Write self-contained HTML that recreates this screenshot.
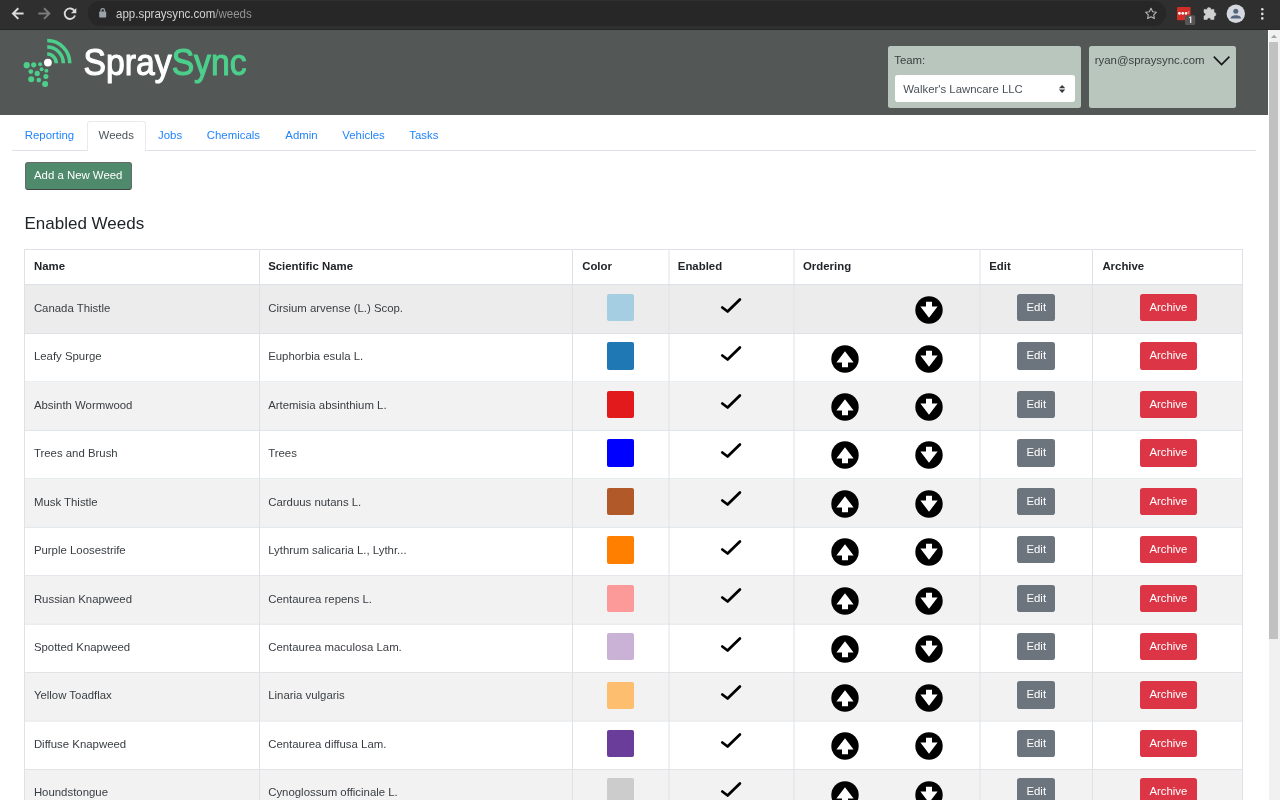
<!DOCTYPE html><html><head><meta charset="utf-8"><title>SpraySync - Weeds</title><style>
*{box-sizing:border-box;margin:0;padding:0}
html,body{width:1280px;height:800px;overflow:hidden;background:#fff}
#root{position:absolute;left:0;top:0;width:1280px;height:800px;will-change:transform}
body{position:relative;font-family:"Liberation Sans",sans-serif;color:#212529;font-size:11.4px;line-height:17px}
.a{position:absolute;white-space:nowrap}
#chrome{position:absolute;left:0;top:0;width:1280px;height:30px;background:#2f2f2f;border-bottom:1px solid #262626}
#pill{position:absolute;left:88px;top:1.2px;width:1077.5px;height:24.4px;border-radius:12.2px;background:#272727}
#url{position:absolute;left:115.5px;top:6px;font-size:12.4px;line-height:16px;color:#d2d2d2;transform:scaleX(0.93);transform-origin:0 0}
#url span{color:#949494}
#hdr{position:absolute;left:0;top:30px;width:1268px;height:85px;background:#535857}
.box{position:absolute;top:46px;height:62px;background:#b8c6be;border-radius:2.5px}
.sel{position:absolute;left:894.5px;top:75.3px;width:180px;height:26.7px;background:#fff;border-radius:2.8px}
.tab{position:absolute;top:126.7px;color:#007bff}
#navline{position:absolute;left:12px;top:150px;width:1244px;height:1px;background:#dee2e6}
#acttab{position:absolute;left:86.5px;top:120.5px;width:59.3px;height:30.5px;background:#fff;border:1px solid #e8eaed;border-bottom:none;border-radius:3px 3px 0 0}
#addbtn{position:absolute;left:24.6px;top:162px;width:107.4px;height:27.6px;background:#4f8a6c;border:1px solid #66686b;border-bottom-color:#3f4543;border-radius:3px;color:#fff}
#h4{position:absolute;left:24.5px;top:213.6px;font-size:17px;line-height:20px;color:#212529}
.th{position:absolute;top:257.5px;font-weight:bold;color:#212529}
.sw{position:absolute;width:27px;height:27.4px;border-radius:2px}
.td{color:#393d41}
.btn{position:absolute;height:27.4px;border-radius:2.8px;color:#fff;text-align:center;line-height:27.4px}
.edit{left:1017.25px;width:38px;background:#6c757d}
.arch{left:1140px;width:56.75px;background:#dc3545}
#sb{position:absolute;left:1268px;top:30px;width:12px;height:770px;background:#f1f1f1;border-left:1px solid #fff}
#thumb{position:absolute;left:1269px;top:42px;width:9.2px;height:597px;background:#c1c1c1}
</style></head><body><div id="root">
<div id="chrome"></div><div id="pill"></div>
<svg class="a" style="left:0;top:0" width="120" height="30" viewBox="0 0 120 30"><g fill="none" stroke-linecap="butt" stroke-width="2"><path d="M23.6 13.6H13.4M18.3 8.3L13 13.6L18.3 18.9" stroke="#dcdcdc"/><path d="M38.3 13.6H48.6M44 8.3L49.3 13.6L44 18.9" stroke="#7b7b7b"/><path d="M74.6 11.05A5.3 5.3 0 1 0 75 15.5" stroke="#dcdcdc" stroke-width="1.85"/></g><path d="M76.3 7.9V13.2H71Z" fill="#dcdcdc"/><rect x="99.2" y="11.6" width="7" height="6" rx="0.8" fill="#9da3ab"/><path d="M100.9 11.8V10.4a1.8 1.8 0 0 1 3.6 0V11.8" fill="none" stroke="#9da3ab" stroke-width="1.3"/></svg>
<div id="url">app.spraysync.com<span>/weeds</span></div>
<svg class="a" style="left:1140px;top:0" width="140" height="30" viewBox="1140 0 140 30"><path d="M1151 8.3l1.65 3.4 3.75.5-2.7 2.6.65 3.75-3.35-1.8-3.35 1.8.65-3.75-2.7-2.6 3.75-.5z" fill="none" stroke="#b4b4b4" stroke-width="1.15" stroke-linejoin="round"/><rect x="1177" y="7" width="13.6" height="13.3" rx="1" fill="#d32d27"/><rect x="1178.1" y="12.1" width="2.7" height="2.6" rx="1.1" fill="#fff"/><rect x="1181.4" y="12.1" width="2.7" height="2.6" rx="1.1" fill="#fff"/><rect x="1184.7" y="12.1" width="2.7" height="2.6" rx="1.1" fill="#fff"/><rect x="1188.4" y="11.2" width="0.8" height="2.4" fill="#f4c4c2"/><rect x="1185" y="15.2" width="10.2" height="9.8" rx="1.5" fill="#555"/><path d="M1190.1 16.5h1.2v6.4h-1.2zM1190.1 16.5l-1 0.9v0.9l1-0.6z" fill="#f0f0f0"/><path d="M1204 9.4H1207.1A1.9 1.9 0 0 1 1210.9 9.4H1214V12.4A1.9 1.9 0 0 1 1214 16.2V19.5H1210.8A1.8 1.8 0 0 0 1207.2 19.5H1204V15.9A1.6 1.6 0 0 0 1204 12.7Z" fill="#d0d0d0" stroke="#d0d0d0" stroke-width="0.5" stroke-linejoin="round"/><circle cx="1235.8" cy="13.7" r="9.2" fill="#d5d8de"/><circle cx="1235.8" cy="11.3" r="2.5" fill="#55657d"/><path d="M1230.6 18.6c0-2.4 2.6-3.4 5.2-3.4s5.2 1 5.2 3.4z" fill="#55657d"/><circle cx="1262.3" cy="9.3" r="1.3" fill="#ddd"/><circle cx="1262.3" cy="13.9" r="1.3" fill="#ddd"/><circle cx="1262.3" cy="18.4" r="1.3" fill="#ddd"/></svg>
<div id="hdr"></div>
<svg class="a" style="left:0;top:30px" width="260" height="85" viewBox="0 30 260 85"><circle cx="26.7" cy="65.2" r="3.1" fill="#4ccf8b"/><circle cx="33.7" cy="64.8" r="2.6" fill="#4ccf8b"/><circle cx="40.1" cy="64.2" r="2.0" fill="#4ccf8b"/><circle cx="41.6" cy="69.2" r="2.0" fill="#4ccf8b"/><circle cx="46.4" cy="70.7" r="2.0" fill="#4ccf8b"/><circle cx="30.8" cy="71.6" r="2.4" fill="#4ccf8b"/><circle cx="37.2" cy="73.4" r="2.6" fill="#4ccf8b"/><circle cx="45.9" cy="76.6" r="2.5" fill="#4ccf8b"/><circle cx="31.2" cy="79.2" r="3.0" fill="#4ccf8b"/><circle cx="38.8" cy="80.1" r="2.3" fill="#4ccf8b"/><circle cx="45.1" cy="84.1" r="3.0" fill="#4ccf8b"/><circle cx="47.9" cy="62.6" r="3.9" fill="#fff"/><path d="M47.2 54.1A9.1 9.1 0 0 1 56.300000000000004 63.2" fill="none" stroke="#4ccf8b" stroke-width="3.5"/><path d="M47.2 47.1A16.1 16.1 0 0 1 63.300000000000004 63.2" fill="none" stroke="#4ccf8b" stroke-width="3.5"/><path d="M47.2 40.6A22.6 22.6 0 0 1 69.80000000000001 63.2" fill="none" stroke="#4ccf8b" stroke-width="3.5"/><text x="83.6" y="75.0" font-family="Liberation Sans" font-size="36" font-weight="normal" fill="#fff" stroke="#fff" stroke-width="1.1" stroke-linejoin="round" textLength="163" lengthAdjust="spacingAndGlyphs">Spray<tspan fill="#4ccf8b" stroke="#4ccf8b">Sync</tspan></text></svg>
<div class="box" style="left:888.2px;width:192.8px"></div>
<div class="box" style="left:1089px;width:147px"></div>
<div class="a" style="left:894.2px;top:52px;color:#3a3f3d">Team:</div>
<div class="sel"></div>
<div class="a" style="left:903.3px;top:81px;color:#495057">Walker's Lawncare LLC</div>
<svg class="a" style="left:1055px;top:82px" width="14" height="14" viewBox="1055 82 14 14"><path d="M1058.9 88.3L1062.1 84.9L1065.3 88.3Z M1058.9 89.5L1062.1 92.9L1065.3 89.5Z" fill="#343a40"/></svg>
<div class="a" style="left:1094.8px;top:52px;color:#3a3f3d">ryan@spraysync.com</div>
<svg class="a" style="left:1210px;top:52px" width="24" height="16" viewBox="1210 52 24 16"><path d="M1213.8 56.6L1221.6 64.6L1229.4 56.6" fill="none" stroke="#161616" stroke-width="1.6"/></svg>
<div id="navline"></div><div id="acttab"></div>
<div class="tab a" style="left:24.8px;color:#2284fc">Reporting</div>
<div class="tab a" style="left:98.6px;color:#495057">Weeds</div>
<div class="tab a" style="left:158.1px;color:#2284fc">Jobs</div>
<div class="tab a" style="left:206.8px;color:#2284fc">Chemicals</div>
<div class="tab a" style="left:285.3px;color:#2284fc">Admin</div>
<div class="tab a" style="left:342.3px;color:#2284fc">Vehicles</div>
<div class="tab a" style="left:409.3px;color:#2284fc">Tasks</div>
<div id="addbtn"><div class="a" style="left:8.4px;top:3.8px">Add a New Weed</div></div>
<div id="h4">Enabled Weeds</div>
<svg class="a" style="left:0;top:249px" width="1268" height="551" viewBox="0 249 1268 551"><rect x="25" y="285.50" width="1217" height="47.50" fill="#ececec"/><rect x="24" y="333.00" width="1219" height="1" fill="#dee2e6"/><rect x="24" y="381.44" width="1219" height="1" fill="#dee2e6"/><rect x="25" y="382.44" width="1217" height="47.44" fill="#f2f2f2"/><rect x="24" y="429.88" width="1219" height="1" fill="#dee2e6"/><rect x="24" y="478.32" width="1219" height="1" fill="#dee2e6"/><rect x="25" y="479.32" width="1217" height="47.44" fill="#f2f2f2"/><rect x="24" y="526.76" width="1219" height="1" fill="#dee2e6"/><rect x="24" y="575.20" width="1219" height="1" fill="#dee2e6"/><rect x="25" y="576.20" width="1217" height="47.44" fill="#f2f2f2"/><rect x="24" y="623.64" width="1219" height="1" fill="#dee2e6"/><rect x="24" y="672.08" width="1219" height="1" fill="#dee2e6"/><rect x="25" y="673.08" width="1217" height="47.44" fill="#f2f2f2"/><rect x="24" y="720.52" width="1219" height="1" fill="#dee2e6"/><rect x="24" y="768.96" width="1219" height="1" fill="#dee2e6"/><rect x="25" y="769.96" width="1217" height="47.44" fill="#f2f2f2"/><rect x="24" y="817.40" width="1219" height="1" fill="#dee2e6"/><rect x="24" y="249" width="1219" height="1" fill="#dee2e6"/><rect x="24" y="284" width="1219" height="1.5" fill="#dee2e6"/><rect x="24" y="249" width="1" height="551" fill="#dee2e6"/><rect x="259" y="249" width="1" height="551" fill="#dee2e6"/><rect x="572" y="249" width="1" height="551" fill="#dee2e6"/><rect x="668.5" y="249" width="1" height="551" fill="#dee2e6"/><rect x="793.5" y="249" width="1" height="551" fill="#dee2e6"/><rect x="979.5" y="249" width="1" height="551" fill="#dee2e6"/><rect x="1092" y="249" width="1" height="551" fill="#dee2e6"/><rect x="1242" y="249" width="1" height="551" fill="#dee2e6"/></svg>
<div class="th a" style="left:34px">Name</div>
<div class="th a" style="left:268.2px">Scientific Name</div>
<div class="th a" style="left:582.2px">Color</div>
<div class="th a" style="left:677.8px">Enabled</div>
<div class="th a" style="left:803px">Ordering</div>
<div class="th a" style="left:989.2px">Edit</div>
<div class="th a" style="left:1102.4px">Archive</div>
<div class="a td" style="left:33.9px;top:299.90px">Canada Thistle</div>
<div class="a td" style="left:268.2px;top:299.90px">Cirsium arvense (L.) Scop.</div>
<div class="sw" style="left:607px;top:294.00px;background:#a6cee3"></div>
<svg class="a" style="left:715px;top:285.50px" width="32" height="40" viewBox="0 0 32 40"><path d="M7.3 21.5L12.6 25.5L24.9 13.5" fill="none" stroke="#000" stroke-width="2.75" stroke-linecap="round" stroke-linejoin="round"/></svg>
<svg class="a" style="left:915px;top:296.10px" width="28" height="28" viewBox="-14 -14 28 28"><circle r="13.7" fill="#000"/><path d="M0 7.7L8.6 -3.6H3V-8.2H-3V-3.6H-8.6Z" fill="#fff"/></svg>
<div class="btn edit" style="top:293.90px">Edit</div>
<div class="btn arch" style="top:293.90px">Archive</div>
<div class="a td" style="left:33.9px;top:348.34px">Leafy Spurge</div>
<div class="a td" style="left:268.2px;top:348.34px">Euphorbia esula L.</div>
<div class="sw" style="left:607px;top:342.44px;background:#1f78b4"></div>
<svg class="a" style="left:715px;top:333.94px" width="32" height="40" viewBox="0 0 32 40"><path d="M7.3 21.5L12.6 25.5L24.9 13.5" fill="none" stroke="#000" stroke-width="2.75" stroke-linecap="round" stroke-linejoin="round"/></svg>
<svg class="a" style="left:831px;top:344.54px" width="28" height="28" viewBox="-14 -14 28 28"><circle r="13.7" fill="#000"/><path d="M0 -7.7L8.6 3.6H3V8.2H-3V3.6H-8.6Z" fill="#fff"/></svg>
<svg class="a" style="left:915px;top:344.54px" width="28" height="28" viewBox="-14 -14 28 28"><circle r="13.7" fill="#000"/><path d="M0 7.7L8.6 -3.6H3V-8.2H-3V-3.6H-8.6Z" fill="#fff"/></svg>
<div class="btn edit" style="top:342.34px">Edit</div>
<div class="btn arch" style="top:342.34px">Archive</div>
<div class="a td" style="left:33.9px;top:396.78px">Absinth Wormwood</div>
<div class="a td" style="left:268.2px;top:396.78px">Artemisia absinthium L.</div>
<div class="sw" style="left:607px;top:390.88px;background:#e31a1c"></div>
<svg class="a" style="left:715px;top:382.38px" width="32" height="40" viewBox="0 0 32 40"><path d="M7.3 21.5L12.6 25.5L24.9 13.5" fill="none" stroke="#000" stroke-width="2.75" stroke-linecap="round" stroke-linejoin="round"/></svg>
<svg class="a" style="left:831px;top:392.98px" width="28" height="28" viewBox="-14 -14 28 28"><circle r="13.7" fill="#000"/><path d="M0 -7.7L8.6 3.6H3V8.2H-3V3.6H-8.6Z" fill="#fff"/></svg>
<svg class="a" style="left:915px;top:392.98px" width="28" height="28" viewBox="-14 -14 28 28"><circle r="13.7" fill="#000"/><path d="M0 7.7L8.6 -3.6H3V-8.2H-3V-3.6H-8.6Z" fill="#fff"/></svg>
<div class="btn edit" style="top:390.78px">Edit</div>
<div class="btn arch" style="top:390.78px">Archive</div>
<div class="a td" style="left:33.9px;top:445.22px">Trees and Brush</div>
<div class="a td" style="left:268.2px;top:445.22px">Trees</div>
<div class="sw" style="left:607px;top:439.32px;background:#0000ff"></div>
<svg class="a" style="left:715px;top:430.82px" width="32" height="40" viewBox="0 0 32 40"><path d="M7.3 21.5L12.6 25.5L24.9 13.5" fill="none" stroke="#000" stroke-width="2.75" stroke-linecap="round" stroke-linejoin="round"/></svg>
<svg class="a" style="left:831px;top:441.42px" width="28" height="28" viewBox="-14 -14 28 28"><circle r="13.7" fill="#000"/><path d="M0 -7.7L8.6 3.6H3V8.2H-3V3.6H-8.6Z" fill="#fff"/></svg>
<svg class="a" style="left:915px;top:441.42px" width="28" height="28" viewBox="-14 -14 28 28"><circle r="13.7" fill="#000"/><path d="M0 7.7L8.6 -3.6H3V-8.2H-3V-3.6H-8.6Z" fill="#fff"/></svg>
<div class="btn edit" style="top:439.22px">Edit</div>
<div class="btn arch" style="top:439.22px">Archive</div>
<div class="a td" style="left:33.9px;top:493.66px">Musk Thistle</div>
<div class="a td" style="left:268.2px;top:493.66px">Carduus nutans L.</div>
<div class="sw" style="left:607px;top:487.76px;background:#b15928"></div>
<svg class="a" style="left:715px;top:479.26px" width="32" height="40" viewBox="0 0 32 40"><path d="M7.3 21.5L12.6 25.5L24.9 13.5" fill="none" stroke="#000" stroke-width="2.75" stroke-linecap="round" stroke-linejoin="round"/></svg>
<svg class="a" style="left:831px;top:489.86px" width="28" height="28" viewBox="-14 -14 28 28"><circle r="13.7" fill="#000"/><path d="M0 -7.7L8.6 3.6H3V8.2H-3V3.6H-8.6Z" fill="#fff"/></svg>
<svg class="a" style="left:915px;top:489.86px" width="28" height="28" viewBox="-14 -14 28 28"><circle r="13.7" fill="#000"/><path d="M0 7.7L8.6 -3.6H3V-8.2H-3V-3.6H-8.6Z" fill="#fff"/></svg>
<div class="btn edit" style="top:487.66px">Edit</div>
<div class="btn arch" style="top:487.66px">Archive</div>
<div class="a td" style="left:33.9px;top:542.10px">Purple Loosestrife</div>
<div class="a td" style="left:268.2px;top:542.10px">Lythrum salicaria L., Lythr...</div>
<div class="sw" style="left:607px;top:536.20px;background:#ff7f00"></div>
<svg class="a" style="left:715px;top:527.70px" width="32" height="40" viewBox="0 0 32 40"><path d="M7.3 21.5L12.6 25.5L24.9 13.5" fill="none" stroke="#000" stroke-width="2.75" stroke-linecap="round" stroke-linejoin="round"/></svg>
<svg class="a" style="left:831px;top:538.30px" width="28" height="28" viewBox="-14 -14 28 28"><circle r="13.7" fill="#000"/><path d="M0 -7.7L8.6 3.6H3V8.2H-3V3.6H-8.6Z" fill="#fff"/></svg>
<svg class="a" style="left:915px;top:538.30px" width="28" height="28" viewBox="-14 -14 28 28"><circle r="13.7" fill="#000"/><path d="M0 7.7L8.6 -3.6H3V-8.2H-3V-3.6H-8.6Z" fill="#fff"/></svg>
<div class="btn edit" style="top:536.10px">Edit</div>
<div class="btn arch" style="top:536.10px">Archive</div>
<div class="a td" style="left:33.9px;top:590.54px">Russian Knapweed</div>
<div class="a td" style="left:268.2px;top:590.54px">Centaurea repens L.</div>
<div class="sw" style="left:607px;top:584.64px;background:#fb9a99"></div>
<svg class="a" style="left:715px;top:576.14px" width="32" height="40" viewBox="0 0 32 40"><path d="M7.3 21.5L12.6 25.5L24.9 13.5" fill="none" stroke="#000" stroke-width="2.75" stroke-linecap="round" stroke-linejoin="round"/></svg>
<svg class="a" style="left:831px;top:586.74px" width="28" height="28" viewBox="-14 -14 28 28"><circle r="13.7" fill="#000"/><path d="M0 -7.7L8.6 3.6H3V8.2H-3V3.6H-8.6Z" fill="#fff"/></svg>
<svg class="a" style="left:915px;top:586.74px" width="28" height="28" viewBox="-14 -14 28 28"><circle r="13.7" fill="#000"/><path d="M0 7.7L8.6 -3.6H3V-8.2H-3V-3.6H-8.6Z" fill="#fff"/></svg>
<div class="btn edit" style="top:584.54px">Edit</div>
<div class="btn arch" style="top:584.54px">Archive</div>
<div class="a td" style="left:33.9px;top:638.98px">Spotted Knapweed</div>
<div class="a td" style="left:268.2px;top:638.98px">Centaurea maculosa Lam.</div>
<div class="sw" style="left:607px;top:633.08px;background:#cab2d6"></div>
<svg class="a" style="left:715px;top:624.58px" width="32" height="40" viewBox="0 0 32 40"><path d="M7.3 21.5L12.6 25.5L24.9 13.5" fill="none" stroke="#000" stroke-width="2.75" stroke-linecap="round" stroke-linejoin="round"/></svg>
<svg class="a" style="left:831px;top:635.18px" width="28" height="28" viewBox="-14 -14 28 28"><circle r="13.7" fill="#000"/><path d="M0 -7.7L8.6 3.6H3V8.2H-3V3.6H-8.6Z" fill="#fff"/></svg>
<svg class="a" style="left:915px;top:635.18px" width="28" height="28" viewBox="-14 -14 28 28"><circle r="13.7" fill="#000"/><path d="M0 7.7L8.6 -3.6H3V-8.2H-3V-3.6H-8.6Z" fill="#fff"/></svg>
<div class="btn edit" style="top:632.98px">Edit</div>
<div class="btn arch" style="top:632.98px">Archive</div>
<div class="a td" style="left:33.9px;top:687.42px">Yellow Toadflax</div>
<div class="a td" style="left:268.2px;top:687.42px">Linaria vulgaris</div>
<div class="sw" style="left:607px;top:681.52px;background:#fdbf6f"></div>
<svg class="a" style="left:715px;top:673.02px" width="32" height="40" viewBox="0 0 32 40"><path d="M7.3 21.5L12.6 25.5L24.9 13.5" fill="none" stroke="#000" stroke-width="2.75" stroke-linecap="round" stroke-linejoin="round"/></svg>
<svg class="a" style="left:831px;top:683.62px" width="28" height="28" viewBox="-14 -14 28 28"><circle r="13.7" fill="#000"/><path d="M0 -7.7L8.6 3.6H3V8.2H-3V3.6H-8.6Z" fill="#fff"/></svg>
<svg class="a" style="left:915px;top:683.62px" width="28" height="28" viewBox="-14 -14 28 28"><circle r="13.7" fill="#000"/><path d="M0 7.7L8.6 -3.6H3V-8.2H-3V-3.6H-8.6Z" fill="#fff"/></svg>
<div class="btn edit" style="top:681.42px">Edit</div>
<div class="btn arch" style="top:681.42px">Archive</div>
<div class="a td" style="left:33.9px;top:735.86px">Diffuse Knapweed</div>
<div class="a td" style="left:268.2px;top:735.86px">Centaurea diffusa Lam.</div>
<div class="sw" style="left:607px;top:729.96px;background:#6a3d9a"></div>
<svg class="a" style="left:715px;top:721.46px" width="32" height="40" viewBox="0 0 32 40"><path d="M7.3 21.5L12.6 25.5L24.9 13.5" fill="none" stroke="#000" stroke-width="2.75" stroke-linecap="round" stroke-linejoin="round"/></svg>
<svg class="a" style="left:831px;top:732.06px" width="28" height="28" viewBox="-14 -14 28 28"><circle r="13.7" fill="#000"/><path d="M0 -7.7L8.6 3.6H3V8.2H-3V3.6H-8.6Z" fill="#fff"/></svg>
<svg class="a" style="left:915px;top:732.06px" width="28" height="28" viewBox="-14 -14 28 28"><circle r="13.7" fill="#000"/><path d="M0 7.7L8.6 -3.6H3V-8.2H-3V-3.6H-8.6Z" fill="#fff"/></svg>
<div class="btn edit" style="top:729.86px">Edit</div>
<div class="btn arch" style="top:729.86px">Archive</div>
<div class="a td" style="left:33.9px;top:784.30px">Houndstongue</div>
<div class="a td" style="left:268.2px;top:784.30px">Cynoglossum officinale L.</div>
<div class="sw" style="left:607px;top:778.40px;background:#cccccc"></div>
<svg class="a" style="left:715px;top:769.90px" width="32" height="40" viewBox="0 0 32 40"><path d="M7.3 21.5L12.6 25.5L24.9 13.5" fill="none" stroke="#000" stroke-width="2.75" stroke-linecap="round" stroke-linejoin="round"/></svg>
<svg class="a" style="left:831px;top:780.50px" width="28" height="28" viewBox="-14 -14 28 28"><circle r="13.7" fill="#000"/><path d="M0 -7.7L8.6 3.6H3V8.2H-3V3.6H-8.6Z" fill="#fff"/></svg>
<svg class="a" style="left:915px;top:780.50px" width="28" height="28" viewBox="-14 -14 28 28"><circle r="13.7" fill="#000"/><path d="M0 7.7L8.6 -3.6H3V-8.2H-3V-3.6H-8.6Z" fill="#fff"/></svg>
<div class="btn edit" style="top:778.30px">Edit</div>
<div class="btn arch" style="top:778.30px">Archive</div>
<div id="sb"></div>
<svg class="a" style="left:1268px;top:30px" width="12" height="12" viewBox="0 0 12 12"><path d="M3 8.1L6 4.8L9 8.1Z" fill="#a3a3a3"/></svg>
<div id="thumb"></div>
</div></body></html>
